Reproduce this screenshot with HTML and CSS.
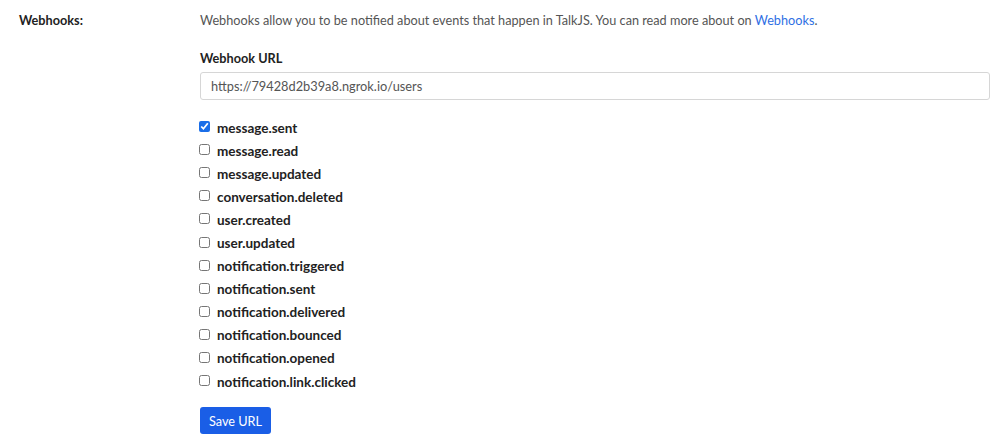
FILE: index.html
```html
<!DOCTYPE html>
<html lang="en">
<head>
  <meta charset="UTF-8">
  <meta name="viewport" content="width=device-width, initial-scale=1.0">
  <title>Webhooks</title>
  <link rel="stylesheet" href="styles.css">
</head>
<body>
  <div class="setting">
    <div class="setting-label">Webhooks:</div>
    <div class="setting-body">
      <p class="description">Webhooks allow you to be notified about events that happen in TalkJS. You can read more about on <a href="#">Webhooks</a>.</p>

      <label class="field-label" for="url">Webhook URL</label>
      <input class="url-input" id="url" type="text" value="https://79428d2b39a8.ngrok.io/users">

      <div class="events">
        <label class="event"><input type="checkbox" checked> message.sent</label>
        <label class="event"><input type="checkbox"> message.read</label>
        <label class="event"><input type="checkbox"> message.updated</label>
        <label class="event"><input type="checkbox"> conversation.deleted</label>
        <label class="event"><input type="checkbox"> user.created</label>
        <label class="event"><input type="checkbox"> user.updated</label>
        <label class="event"><input type="checkbox"> notification.triggered</label>
        <label class="event"><input type="checkbox"> notification.sent</label>
        <label class="event"><input type="checkbox"> notification.delivered</label>
        <label class="event"><input type="checkbox"> notification.bounced</label>
        <label class="event"><input type="checkbox"> notification.opened</label>
        <label class="event"><input type="checkbox"> notification.link.clicked</label>
      </div>

      <button class="save-btn">Save URL</button>
    </div>
  </div>
</body>
</html>
```

FILE: styles.css
```css
body {
  font-family: Lato, "Open Sans", sans-serif;
  margin: 0;
  background-color: #fff;
  color: #222;
}

.setting {
  display: flex;
  padding: 11px 10px 0 19px;
}

.setting-label {
  width: 181px;
  flex-shrink: 0;
  font-size: 12.7px;
  font-weight: bold;
  line-height: 18px;
}

.setting-body {
  flex: 1;
  display: flex;
  flex-direction: column;
}

.description {
  margin: 0;
  font-size: 12.7px;
  line-height: 18px;
  color: #555;
}

.description a {
  color: #2f6fe4;
  text-decoration: none;
}

.field-label {
  margin-top: 20px;
  font-size: 12.7px;
  font-weight: bold;
  line-height: 18px;
}

.url-input {
  margin-top: 5px;
  height: 28px;
  box-sizing: border-box;
  padding: 0 10px;
  border: 1px solid #d6d6d6;
  border-radius: 3px;
  font-family: inherit;
  font-size: 12.8px;
  color: #555;
}

.events {
  margin-top: 16px;
  display: flex;
  flex-direction: column;
}

.event {
  display: flex;
  align-items: center;
  height: 23.1px;
  font-size: 13.5px;
  font-weight: bold;
}

.event input {
  width: 11px;
  height: 11px;
  margin: 0 7px 2px -1px;
  accent-color: #1a6ee8;
}

.save-btn {
  align-self: flex-start;
  margin-top: 14px;
  height: 27px;
  padding: 0 9px;
  border: none;
  border-radius: 3px;
  background-color: #1a5ee6;
  color: #fff;
  font-family: inherit;
  font-size: 12.7px;
}
```
